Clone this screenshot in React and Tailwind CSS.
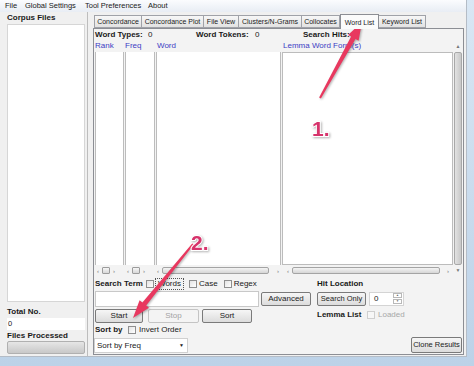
import React from 'react';

const Check = ({ disabled }) => (
  <span
    className={
      disabled
        ? 'inline-block shrink-0 w-[8px] h-[8px] border border-[#cfcfcf] bg-[#f7f7f7]'
        : 'inline-block shrink-0 w-[8px] h-[8px] border border-[#8f8f8f] bg-gradient-to-br from-[#e4e4e4] to-white'
    }
  />
);

const Button = ({ children, className = '', disabled }) => (
  <div
    className={
      (disabled
        ? 'border-[#c4c4c4] bg-[#f4f4f4] text-[#a3a3a3] '
        : 'border-[#7a7a7a] bg-gradient-to-b from-[#f6f6f6] to-[#dcdcdc] text-[#222] ') +
      'flex shrink-0 items-center justify-center border rounded-[2px] ' +
      className
    }
  >
    {children}
  </div>
);

const HScrollSmall = () => (
  <div className="flex items-center h-[11px] pl-[2px] gap-[3px] text-[6px] text-[#777]">
    <span>‹</span>
    <span className="w-[8px] h-[7px] border border-[#9c9c9c] rounded-[1px] bg-gradient-to-b from-[#f6f6f6] to-[#d8d8d8]" />
    <span>›</span>
  </div>
);

const HScrollLong = ({ thumb }) => (
  <div className="flex items-center h-[11px] pl-[1px] pr-[3px] gap-[3px] text-[6px] text-[#777]">
    <span>‹</span>
    <span className={`${thumb} h-[7px] border border-[#a4a4a4] rounded-[2px] bg-gradient-to-b from-[#f4f4f4] to-[#d6d6d6]`} />
    <span className="ml-auto">›</span>
  </div>
);

const tabs = [
  ['Concordance', 'w-[48px]'],
  ['Concordance Plot', 'w-[63px]'],
  ['File View', 'w-[36px]'],
  ['Clusters/N-Grams', 'w-[64px]'],
  ['Collocates', 'w-[39px]'],
  ['Word List', 'w-[39px]', true],
  ['Keyword List', 'w-[48px]'],
];

export default function App() {
  return (
    <div className="relative w-[474px] h-[366px] overflow-hidden whitespace-nowrap bg-gradient-to-b from-[#d9e7f4] to-[#bcd2e8] font-['Liberation_Sans',Arial,sans-serif] text-[8px] leading-none text-[#1a1a1a]">
      <div className="w-[467px] h-[357px] bg-[#f0f0f0] flex flex-col border-r border-b border-[#b4bcc6]">
        {/* menu */}
        <div className="h-[12px] flex items-center bg-gradient-to-b from-[#fbfcfe] to-[#e8edf4] text-[7.5px]">
          <span className="shrink-0 w-[25px] pl-[5px]">File</span>
          <span className="shrink-0 w-[60px]">Global Settings</span>
          <span className="shrink-0 w-[63px]">Tool Preferences</span>
          <span className="shrink-0">About</span>
        </div>

        <div className="flex flex-1">
          {/* left panel */}
          <div className="w-[88px] flex flex-col pl-[7px] pr-[2px] border-r border-[#bdbdbd]">
            <div className="h-[12px] flex items-center font-bold">Corpus Files</div>
            <div className="flex-1 bg-white border border-[#d6d6d6]" />
            <div className="h-[12px] mt-[4px] flex items-center font-bold">Total No.</div>
            <div className="h-[12px] bg-white flex items-center pl-[1px] text-[7.5px]">0</div>
            <div className="h-[11px] flex items-center font-bold">Files Processed</div>
            <div className="h-[13px] border border-[#b0b0b0] rounded-[2px] bg-gradient-to-b from-[#e6e6e6] to-[#c8c8c8]" />
            <div className="h-[2px]" />
          </div>

          {/* right panel */}
          <div className="flex-1 flex flex-col pl-[5px] pr-[2px] pb-[1px]">
            <div className="h-[16px] flex items-end pl-[1px]">
              {tabs.map(([label, w, sel]) => (
                <div
                  key={label}
                  className={
                    sel
                      ? `${w} h-[15px] -mb-[1px] z-10 flex items-center justify-center text-[7px] border border-b-0 border-[#8c8e94] bg-[#fbfbfb]`
                      : `${w} h-[13px] flex items-center justify-center text-[7px] border border-[#a0a2a8] -ml-px first:ml-0 bg-gradient-to-b from-[#f7f7f7] to-[#e2e2e2]`
                  }
                >
                  {label}
                </div>
              ))}
            </div>

            <div className="flex-1 flex flex-col border border-[#8c8e94] bg-[#f3f3f3] pl-[1px]">
              <div className="h-[11px] flex items-center font-bold">
                <span className="w-[53px]">Word Types:</span>
                <span className="w-[48px] font-normal">0</span>
                <span className="w-[59px]">Word Tokens:</span>
                <span className="w-[48px] font-normal">0</span>
                <span>Search Hits:</span>
              </div>

              {/* lists */}
              <div className="h-[236px] flex">
                <div className="w-[30px] flex flex-col">
                  <div className="h-[12px] flex items-center text-[#3d3dc4]">Rank</div>
                  <div className="flex-1 mr-[1px] bg-white border-x border-[#bcbcbc]" />
                  <HScrollSmall />
                </div>
                <div className="w-[31px] flex flex-col">
                  <div className="h-[12px] flex items-center text-[#3d3dc4]">Freq</div>
                  <div className="flex-1 mr-[1px] bg-white border-x border-[#bcbcbc]" />
                  <HScrollSmall />
                </div>
                <div className="w-[126px] flex flex-col">
                  <div className="h-[12px] flex items-center pl-[1px] text-[#3d3dc4]">Word</div>
                  <div className="flex-1 mr-[1px] bg-white border-x border-[#bcbcbc]" />
                  <HScrollLong thumb="w-[107px]" />
                </div>
                <div className="w-[171px] flex flex-col">
                  <div className="h-[12px] flex items-center pl-[1px] text-[#3d3dc4]">Lemma Word Form(s)</div>
                  <div className="flex-1 bg-white border border-[#bcbcbc]" />
                  <div className="flex items-center h-[11px] pl-[5px] pr-[4px] gap-[3px] text-[6px] text-[#777]">
                    <span>‹</span>
                    <span className="w-[148px] h-[7px] border border-[#a4a4a4] rounded-[2px] bg-gradient-to-b from-[#f4f4f4] to-[#d6d6d6]" />
                    <span className="ml-auto">›</span>
                  </div>
                </div>
                <div className="w-[10px] flex flex-col items-center">
                  <div className="h-[12px] flex items-center text-[5px] text-[#777]">▲</div>
                  <div className="flex-1 w-[8px] border border-[#a8a8a8] rounded-[2px] bg-gradient-to-r from-[#e2e2e2] to-[#c8c8c8]" />
                  <div className="h-[11px] flex items-center text-[5px] text-[#777]">▼</div>
                </div>
              </div>

              {/* controls */}
              <div className="flex-1 flex">
                <div className="w-[216px] flex flex-col">
                  <div className="h-[13px] mt-[1px] flex items-center">
                    <span className="w-[51px] font-bold">Search Term</span>
                    <Check />
                    <span className="ml-[1px] px-[2px] py-[1px] border border-dotted border-[#555]">Words</span>
                    <span className="ml-[5px] flex"><Check /></span>
                    <span className="ml-[2px]">Case</span>
                    <span className="ml-[6px] flex"><Check /></span>
                    <span className="ml-[2px]">Regex</span>
                  </div>
                  <div className="h-[17px] flex items-center">
                    <div className="w-[164px] h-[16px] bg-white border border-[#c8c8c8]" />
                    <Button className="ml-[2px] w-[50px] h-[14px]">Advanced</Button>
                  </div>
                  <div className="h-[16px] mt-[1px] flex items-center">
                    <Button className="w-[48px] h-[14px]">Start</Button>
                    <Button disabled className="ml-[5px] w-[51px] h-[14px]">Stop</Button>
                    <Button className="ml-[3px] w-[50px] h-[14px]">Sort</Button>
                  </div>
                  <div className="h-[12px] flex items-center">
                    <span className="w-[33px] font-bold">Sort by</span>
                    <Check />
                    <span className="ml-[3px]">Invert Order</span>
                  </div>
                  <div className="mt-[2px] -ml-[1px] w-[94px] h-[15px] flex items-center justify-between pl-[2px] pr-[3px] bg-white border border-[#d0d0d0]">
                    <span>Sort by Freq</span>
                    <span className="text-[5px]">▼</span>
                  </div>
                </div>

                <div className="flex-1 flex flex-col pl-[6px] pr-[1px] pb-[1px]">
                  <div className="h-[13px] mt-[1px] flex items-center font-bold">Hit Location</div>
                  <div className="h-[17px] flex items-center">
                    <Button className="w-[49px] h-[14px] text-[7.5px]">Search Only</Button>
                    <div className="ml-[3px] w-[35px] h-[14px] flex items-center bg-white border border-[#d4d4d4] pl-[4px]">
                      <span>0</span>
                      <div className="ml-auto mr-[1px] w-[9px] flex flex-col gap-[1px]">
                        <span className="h-[5px] border border-[#b8b8b8] text-[3px] flex items-center justify-center text-[#666]">▲</span>
                        <span className="h-[5px] border border-[#b8b8b8] text-[3px] flex items-center justify-center text-[#666]">▼</span>
                      </div>
                    </div>
                  </div>
                  <div className="h-[15px] flex items-center">
                    <span className="w-[50px] font-bold">Lemma List</span>
                    <Check disabled />
                    <span className="ml-[3px] text-[#a8a8a8]">Loaded</span>
                  </div>
                  <div className="mt-auto flex justify-end">
                    <Button className="w-[51px] h-[16px] text-[7.5px]">Clone Results</Button>
                  </div>
                </div>
              </div>
            </div>
          </div>
        </div>
      </div>

      {/* annotation arrows */}
      <svg
        className="absolute inset-0 pointer-events-none drop-shadow-[1px_1px_1px_rgba(0,0,0,0.3)]"
        width="474"
        height="366"
        viewBox="0 0 474 366"
      >
        <polygon
          fill="#e8385f"
          points="320.9,98.5 355.5,39 358.6,40.7 362,22 348,34.9 351.1,36.6 319.1,97.5"
        />
        <polygon
          fill="#e8385f"
          points="193.8,244.6 146.2,305.6 149,307.8 133,318 139.6,300.2 142.4,302.4 192.2,243.4"
        />
        <text
          x="312"
          y="136"
          fontFamily="Liberation Sans, Arial, sans-serif"
          fontWeight="bold"
          fontSize="21"
          fill="#d6336b"
          stroke="#ffffff"
          strokeWidth="2"
          paintOrder="stroke"
        >
          1.
        </text>
        <text
          x="191"
          y="250"
          fontFamily="Liberation Sans, Arial, sans-serif"
          fontWeight="bold"
          fontSize="21"
          fill="#d6336b"
          stroke="#ffffff"
          strokeWidth="2"
          paintOrder="stroke"
        >
          2.
        </text>
      </svg>
    </div>
  );
}
